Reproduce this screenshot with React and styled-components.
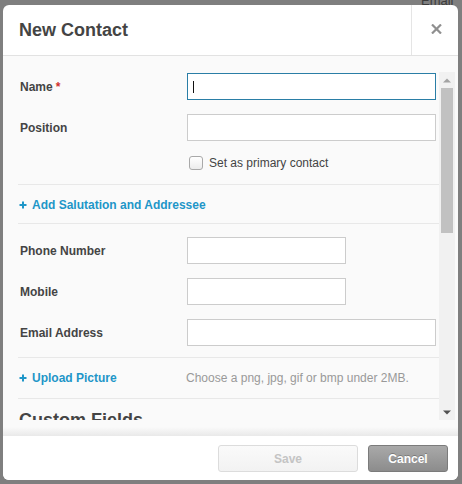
import React from "react";
import styled, { createGlobalStyle } from "styled-components";

const Global = createGlobalStyle`
  html, body { margin: 0; padding: 0; }
  body {
    background: #7f7f7f;
    font-family: "Liberation Sans", Arial, sans-serif;
    -webkit-font-smoothing: antialiased;
  }
  * { box-sizing: border-box; }
`;

const Backdrop = styled.div`
  position: relative;
  width: 462px;
  height: 484px;
  padding: 5px 4px 4px 3px;
  background: #7f7f7f;
  overflow: hidden;
`;

const PageGhost = styled.div`
  position: absolute;
  top: -7px;
  left: 421px;
  font-size: 13px;
  color: #3c3c3c;
`;

const Modal = styled.div`
  position: relative;
  width: 455px;
  height: 475px;
  background: #fff;
  border-radius: 6px;
  display: flex;
  flex-direction: column;
  overflow: hidden;
`;

const Header = styled.div`
  height: 51px;
  display: flex;
  border-bottom: 1px solid #e2e2e2;
  flex-shrink: 0;
`;

const Title = styled.h2`
  flex: 1;
  margin: 0;
  padding-left: 16px;
  font-size: 18px;
  font-weight: bold;
  line-height: 50px;
  color: #444;
`;

const CloseButton = styled.button`
  width: 47px;
  height: 50px;
  border: none;
  border-left: 1px solid #e5e5e5;
  background: transparent;
  display: flex;
  align-items: center;
  justify-content: center;
  padding: 0 0 2px 2px;
  cursor: pointer;
`;

const Body = styled.div`
  flex: 1;
  display: flex;
  padding: 16px 3px 16px 15px;
  background: linear-gradient(to bottom, #fafafa 0, #fafafa calc(100% - 9px), #e9e9e9 100%);
  min-height: 0;
`;

const ScrollArea = styled.div`
  flex: 1;
  overflow: hidden;
  padding-top: 1px;
`;

const Section = styled.div`
  padding: ${(p) => p.$pad || "0"};
  border-bottom: ${(p) => (p.$last ? "none" : "1px solid #e8e8e8")};
`;

const FormRow = styled.div`
  display: grid;
  grid-template-columns: 169px 1fr;
  align-items: center;
  height: 27px;
  margin-bottom: ${(p) => p.$gap ?? 14}px;
`;

const Label = styled.label`
  padding-left: 2px;
  font-size: 12px;
  font-weight: bold;
  color: #444;
`;

const Required = styled.span`
  color: #d0312d;
  margin-left: 3px;
`;

const InputWrap = styled.div`
  position: relative;
  width: ${(p) => (p.$short ? "159px" : "249px")};
  height: 27px;
`;

const TextInput = styled.input`
  width: 100%;
  height: 100%;
  border: 1px solid ${(p) => (p.$focused ? "#2a7ea6" : "#cccccc")};
  background: #fff;
  padding: 0 5px;
  font-family: inherit;
  font-size: 12px;
  outline: none;
`;

const Caret = styled.span`
  position: absolute;
  left: 6px;
  top: 8px;
  width: 1px;
  height: 12px;
  background: #111;
`;

const CheckRow = styled.div`
  display: flex;
  align-items: center;
  height: 14px;
  margin-left: 171px;
  gap: 6px;
  font-size: 12px;
  color: #444;
`;

const CheckBox = styled.span`
  width: 14px;
  height: 14px;
  border: 1px solid #a9a9a9;
  border-radius: 3px;
  background: linear-gradient(to bottom, #ffffff, #ececec);
`;

const LinkButton = styled.a`
  display: flex;
  align-items: center;
  gap: 5px;
  padding-left: 1px;
  height: 14px;
  font-size: 12px;
  font-weight: bold;
  color: #1e96c8;
  text-decoration: none;
  white-space: nowrap;
`;

const UploadRow = styled.div`
  display: grid;
  grid-template-columns: 168px 1fr;
  align-items: center;
  height: 14px;
`;

const Hint = styled.span`
  font-size: 12px;
  color: #999;
`;

const SectionTitle = styled.h3`
  margin: 0;
  padding-left: 1px;
  font-size: 18px;
  line-height: 20px;
  font-weight: bold;
  color: #444;
`;

const Scrollbar = styled.div`
  width: 16px;
  background: #f1f1f1;
  display: flex;
  flex-direction: column;
  align-items: center;
`;

const ScrollArrow = styled.div`
  height: 16px;
  width: 16px;
  display: flex;
  align-items: center;
  justify-content: center;
`;

const ScrollThumb = styled.div`
  width: 12px;
  height: 145px;
  background: #c1c1c1;
`;

const ScrollTrack = styled.div`
  flex: 1;
`;

const Footer = styled.div`
  height: 44px;
  flex-shrink: 0;
  display: flex;
  justify-content: flex-end;
  align-items: flex-start;
  gap: 10px;
  padding: 9px 10px 0 0;
  background: #fff;
`;

const Button = styled.button`
  height: 27px;
  width: ${(p) => p.$w}px;
  border-radius: 3px;
  font-family: inherit;
  font-size: 12px;
  font-weight: bold;
  border: 1px solid ${(p) => (p.$primary ? "#7b7b7b" : "#dcdcdc")};
  color: ${(p) => (p.$primary ? "#fff" : "#c4c4c4")};
  background: ${(p) =>
    p.$primary
      ? "linear-gradient(to bottom, #a9a9a9, #8c8c8c)"
      : "linear-gradient(to bottom, #fafafa, #f2f2f2)"};
  text-shadow: ${(p) => (p.$primary ? "0 -1px 0 rgba(0,0,0,0.25)" : "none")};
  cursor: pointer;
`;

const Plus = () => (
  <svg width="8" height="8" viewBox="0 0 8 8">
    <path d="M4 0.5v7M0.5 4h7" stroke="#1e96c8" strokeWidth="2" />
  </svg>
);

export default function App() {
  return (
    <>
      <Global />
      <Backdrop>
        <PageGhost>Email</PageGhost>
        <Modal>
          <Header>
            <Title>New Contact</Title>
            <CloseButton aria-label="Close">
              <svg width="11" height="10" viewBox="0 0 11 10">
                <path d="M1 0.5l9 9M10 0.5l-9 9" stroke="#8f8f8f" strokeWidth="2.2" />
              </svg>
            </CloseButton>
          </Header>
          <Body>
            <ScrollArea>
              <Section $pad="0 0 14px 0">
                <FormRow>
                  <Label>
                    Name<Required>*</Required>
                  </Label>
                  <InputWrap>
                    <TextInput $focused />
                    <Caret />
                  </InputWrap>
                </FormRow>
                <FormRow $gap={15}>
                  <Label>Position</Label>
                  <InputWrap>
                    <TextInput />
                  </InputWrap>
                </FormRow>
                <CheckRow>
                  <CheckBox />
                  Set as primary contact
                </CheckRow>
              </Section>
              <Section $pad="13px 0 11px 0">
                <LinkButton>
                  <Plus />
                  Add Salutation and Addressee
                </LinkButton>
              </Section>
              <Section $pad="13px 0 11px 0">
                <FormRow>
                  <Label>Phone Number</Label>
                  <InputWrap $short>
                    <TextInput />
                  </InputWrap>
                </FormRow>
                <FormRow>
                  <Label>Mobile</Label>
                  <InputWrap $short>
                    <TextInput />
                  </InputWrap>
                </FormRow>
                <FormRow $gap={0}>
                  <Label>Email Address</Label>
                  <InputWrap>
                    <TextInput />
                  </InputWrap>
                </FormRow>
              </Section>
              <Section $pad="13px 0 13px 0">
                <UploadRow>
                  <LinkButton>
                    <Plus />
                    Upload Picture
                  </LinkButton>
                  <Hint>Choose a png, jpg, gif or bmp under 2MB.</Hint>
                </UploadRow>
              </Section>
              <Section $pad="11px 0 0 0" $last>
                <SectionTitle>Custom Fields</SectionTitle>
              </Section>
            </ScrollArea>
            <Scrollbar>
              <ScrollArrow>
                <svg width="8" height="5" viewBox="0 0 8 5">
                  <path d="M0 4.5L4 0.5L8 4.5Z" fill="#a3a3a3" />
                </svg>
              </ScrollArrow>
              <ScrollThumb />
              <ScrollTrack />
              <ScrollArrow>
                <svg width="8" height="5" viewBox="0 0 8 5">
                  <path d="M0 0.5L4 4.5L8 0.5Z" fill="#505050" />
                </svg>
              </ScrollArrow>
            </Scrollbar>
          </Body>
          <Footer>
            <Button $w={140} disabled>
              Save
            </Button>
            <Button $w={80} $primary>
              Cancel
            </Button>
          </Footer>
        </Modal>
      </Backdrop>
    </>
  );
}
